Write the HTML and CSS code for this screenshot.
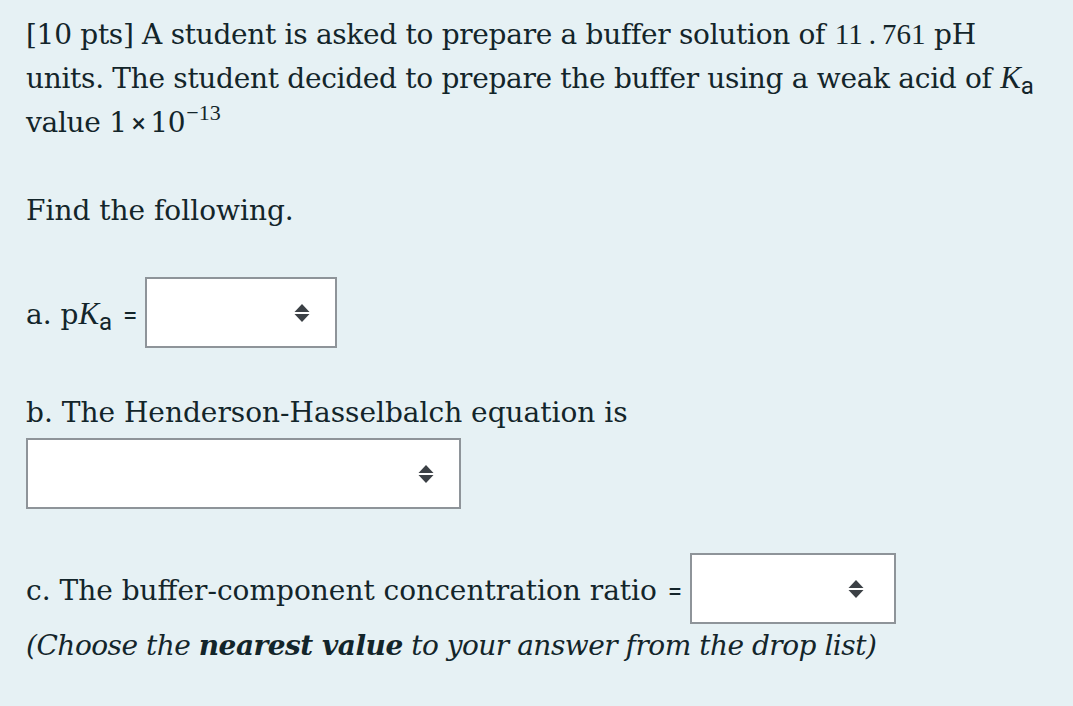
FILE: index.html
```html
<!DOCTYPE html>
<html>
<head>
<meta charset="utf-8">
<link rel="stylesheet" href="styles.css">
</head>
<body>
<div class="question">
  <p class="para intro"><span class="line1">[10 pts] A student is asked to prepare a buffer solution of <span class="math">11</span><span class="math mdot">.</span><span class="math">761</span> pH</span> <span class="line2">units. The student decided to prepare the buffer using a weak acid of <span class="kvar">K</span><span class="sub">a</span></span> value <span class="one">1</span><span class="times">×</span>10<sup class="math sup">−13</sup></p>
  <p class="para find">Find the following.</p>
  <div class="row row-a">
    <span class="label">a. p<span class="kvar">K</span><span class="sub">a</span> <span class="eq">=</span></span>
    <div class="select sel-a"><svg class="arrows" width="16" height="20" viewBox="0 0 16 20"><path d="M8 1 L15.5 9 L0.5 9 Z M0.5 11 L15.5 11 L8 19 Z" fill="#3b4045"/></svg></div>
  </div>
  <p class="para label-b">b. The Henderson-Hasselbalch equation is</p>
  <div class="select sel-b"><svg class="arrows" width="16" height="20" viewBox="0 0 16 20"><path d="M8 1 L15.5 9 L0.5 9 Z M0.5 11 L15.5 11 L8 19 Z" fill="#3b4045"/></svg></div>
  <div class="row row-c">
    <span class="label">c. The buffer-component concentration ratio <span class="eq">=</span></span>
    <div class="select sel-c"><svg class="arrows" width="16" height="20" viewBox="0 0 16 20"><path d="M8 1 L15.5 9 L0.5 9 Z M0.5 11 L15.5 11 L8 19 Z" fill="#3b4045"/></svg></div>
  </div>
  <p class="para note">(Choose the <b>nearest value</b> to your answer from the drop list)</p>
</div>
</body>
</html>
```
FILE: styles.css
```css
html, body {
  margin: 0;
  padding: 0;
  background: #e6f1f4;
}
.question {
  padding: 13px 0 0 26px;
  font-family: "DejaVu Serif", "Liberation Serif", serif;
  font-size: 28px;
  line-height: 44px;
  color: #13252a;
  width: 1020px;
}
.para {
  margin: 0;
}
.intro {
  letter-spacing: -0.3px;
}
.line1, .line2 {
  white-space: nowrap;
}
.find {
  margin-top: 44px;
}
.math {
  font-family: "Liberation Serif", serif;
  font-size: 29px;
  line-height: 1;
  letter-spacing: 0;
  margin-left: 1px;
}
.mdot {
  padding: 0 5px;
}
.kvar {
  font-family: "Liberation Serif", serif;
  font-style: italic;
  font-size: 31px;
  line-height: 1;
}
.sub {
  font-family: "Roboto", "Liberation Sans", sans-serif;
  font-size: 24px;
  line-height: 1;
  position: relative;
  top: 6px;
}
.times {
  font-family: "Roboto", "Liberation Sans", sans-serif;
  font-size: 26px;
  line-height: 1;
  padding: 0 5px;
}
.sup {
  font-size: 22px;
  vertical-align: 12px;
  line-height: 0;
}
.eq {
  font-family: "Roboto", "Liberation Sans", sans-serif;
  font-size: 26px;
  line-height: 1;
  padding-left: 2px;
}
.row {
  display: flex;
  align-items: center;
}
.row-a {
  margin-top: 44px;
  gap: 8px;
}
.label {
  white-space: nowrap;
  position: relative;
  top: 2px;
}
.select {
  box-sizing: border-box;
  height: 71px;
  background: #ffffff;
  border: 2px solid #8e9499;
  display: flex;
  align-items: center;
  justify-content: flex-end;
  padding-right: 25px;
}
.sel-a { width: 192px; }
.sel-b { width: 435px; }
.sel-c { width: 206px; padding-right: 30px; }
.arrows { display: block; }
.label-b {
  margin-top: 43px;
}
.sel-b {
  margin-top: 3px;
}
.row-c {
  margin-top: 44px;
  gap: 8px;
}
.note {
  font-style: italic;
  margin-top: 0;
  letter-spacing: -0.5px;
}
.note b {
  font-weight: bold;
}
```
